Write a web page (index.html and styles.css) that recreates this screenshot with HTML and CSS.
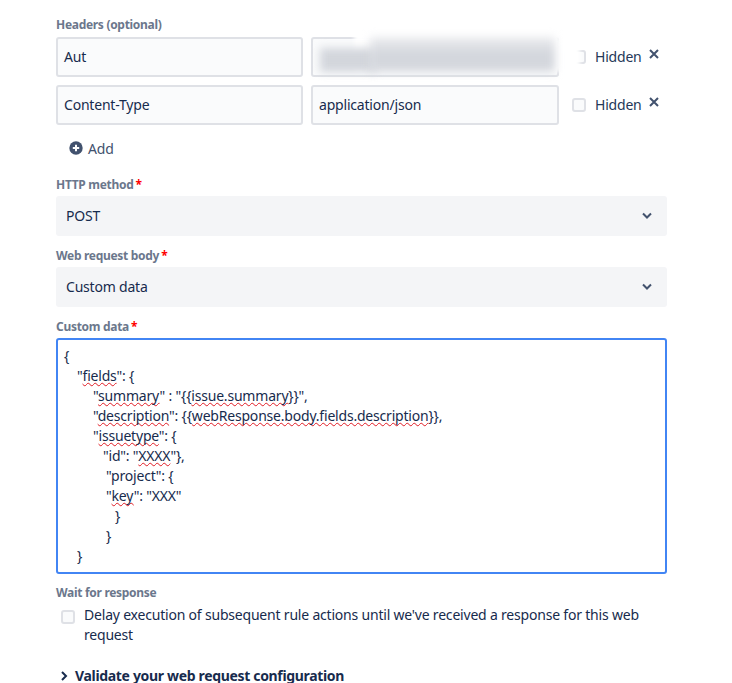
FILE: index.html
```html
<!DOCTYPE html>
<html lang="en">
<head>
<meta charset="utf-8">
<title>Web request</title>
<link rel="stylesheet" href="styles.css">
</head>
<body>
<main class="form">
  <div class="label first">Headers (optional)</div>
  <div class="header-row">
    <div class="input">Aut</div>
    <div class="input"></div>
    <span class="check"></span>
    <span class="hidden-label">Hidden</span>
    <svg class="close" viewBox="0 0 12 12" width="12" height="12"><path d="M2 2l8 8M10 2l-8 8"/></svg>
    <div class="blur blur-a"></div>
    <div class="blur blur-b"></div>
    <div class="blur blur-c"></div>
    <div class="blur blur-d"></div>
  </div>
  <div class="header-row">
    <div class="input">Content-Type</div>
    <div class="input">application/json</div>
    <span class="check"></span>
    <span class="hidden-label">Hidden</span>
    <svg class="close" viewBox="0 0 12 12" width="12" height="12"><path d="M2 2l8 8M10 2l-8 8"/></svg>
  </div>
  <div class="add">
    <svg viewBox="0 0 14 14" width="14" height="14"><circle class="add-disc" cx="7" cy="7" r="6.7"/><path class="add-plus" d="M7 3.8v6.4M3.8 7h6.4"/></svg>
    <span>Add</span>
  </div>
  <div class="label">HTTP method<span class="req">*</span></div>
  <div class="select"><span class="select-text">POST</span><svg viewBox="0 0 10 8" width="10" height="8"><path d="M1 1.5l4 4 4-4"/></svg></div>
  <div class="label">Web request body<span class="req">*</span></div>
  <div class="select"><span class="select-text">Custom data</span><svg viewBox="0 0 10 8" width="10" height="8"><path d="M1 1.5l4 4 4-4"/></svg></div>
  <div class="label">Custom data<span class="req">*</span></div>
  <div class="textarea">
    <div class="line">{</div>
    <div class="line i13">"<u>fields</u>": {</div>
    <div class="line i29">"<u>summary</u>" : "{{<u>issue.summary</u>}}",</div>
    <div class="line i29">"<u>description</u>": {{<u>webResponse.body.fields.description</u>}},</div>
    <div class="line i29">"<u>issuetype</u>": {</div>
    <div class="line i39">"id": "<u>XXXX</u>"},</div>
    <div class="line i42">"project": {</div>
    <div class="line i42">"<u>key</u>": "XXX"</div>
    <div class="line i51">}</div>
    <div class="line i42">}</div>
    <div class="line i13">}</div>
  </div>
  <div class="label wait">Wait for response</div>
  <div class="delay">
    <span class="check"></span>
    <p>Delay execution of subsequent rule actions until we've received a response for this web request</p>
  </div>
  <div class="validate">
    <svg viewBox="0 0 8 10" width="8" height="10"><path d="M2 1l4 4-4 4"/></svg>
    <span>Validate your web request configuration</span>
  </div>
</main>
</body>
</html>
```

FILE: styles.css
```css
* { box-sizing: border-box; }
html, body { margin: 0; height: 683px; overflow: hidden; background: #fff; }
body { font-family: "Noto Sans", "Open Sans", sans-serif; font-size: 14px; letter-spacing: -0.2px; color: #172b4d; }
.form { width: 611px; margin-left: 56px; padding-top: 17px; }
.label { font-size: 12px; font-weight: 700; letter-spacing: -0.3px; color: #6b778c; line-height: 16px; margin-bottom: 3px; }
.label.first { margin-bottom: 4px; }
.req { color: #ff0000; margin-left: 2px; }
.header-row { position: relative; display: flex; align-items: center; height: 40px; margin-bottom: 8px; }
.input { width: 247px; height: 40px; margin-right: 8px; padding: 0 6px; line-height: 36px; background: #fafbfc; border: 2px solid #dfe1e6; border-radius: 3px; }
.input + .input { width: 248px; margin-right: 13px; }
.check { width: 14px; height: 14px; flex: none; background: #fafbfc; border: 2px solid #dfe1e6; border-radius: 3px; }
.hidden-label { margin: 0 0 2px 9px; color: #253858; }
.close { margin: -7px 0 0 6px; fill: none; stroke: #42526e; stroke-width: 2; }
.blur { position: absolute; }
.blur-a { left: 298px; top: -10px; width: 206px; height: 45px; background: #fff; filter: blur(2px); }
.blur-b { left: 500px; top: 3px; width: 24px; height: 30px; background: #fff; filter: blur(2px); }
.blur-c { left: 264px; top: 11px; width: 56px; height: 24px; background: #d3d6dc; filter: blur(4px); }
.blur-d { left: 314px; top: 0; width: 185px; height: 35px; background: linear-gradient(#eceDF0, #d3d6dc 50%, #d6d9df); filter: blur(4px); }
.add { display: flex; align-items: center; gap: 5px; height: 16px; margin: 15px 0 21px 13px; color: #42526e; }
.add-disc { fill: #42526e; }
.add-plus { stroke: #fff; stroke-width: 2; }
.select { display: flex; justify-content: space-between; align-items: center; height: 40px; padding: 0 15px 0 10px; background: #f4f5f7; border-radius: 3px; margin-bottom: 12px; }
.select-text { margin-bottom: 2px; }
.select svg { fill: none; stroke: #42526e; stroke-width: 2; }
.textarea { height: 236px; padding: 6px; border: 2px solid #4285f4; border-radius: 3px; background: #fff; margin-bottom: 11px; }
.line { height: 20px; line-height: 20px; white-space: nowrap; }
.line u { text-decoration: underline wavy #e01b24 1px; text-decoration-skip-ink: none; text-underline-offset: 1px; }
.i13 { padding-left: 13px; }
.i29 { padding-left: 29px; }
.i39 { padding-left: 39px; }
.i42 { padding-left: 42px; }
.i51 { padding-left: 51px; }
.wait { margin-bottom: 4px; }
.delay { display: flex; align-items: flex-start; gap: 9px; padding-left: 5px; }
.delay .check { margin-top: 5px; }
.delay p { margin: 0; line-height: 20px; width: 560px; }
.validate { display: flex; align-items: center; gap: 7px; margin-top: 21px; padding-left: 4px; font-weight: 700; letter-spacing: -0.33px; }
.validate svg { fill: none; stroke: #172b4d; stroke-width: 2; }
```
